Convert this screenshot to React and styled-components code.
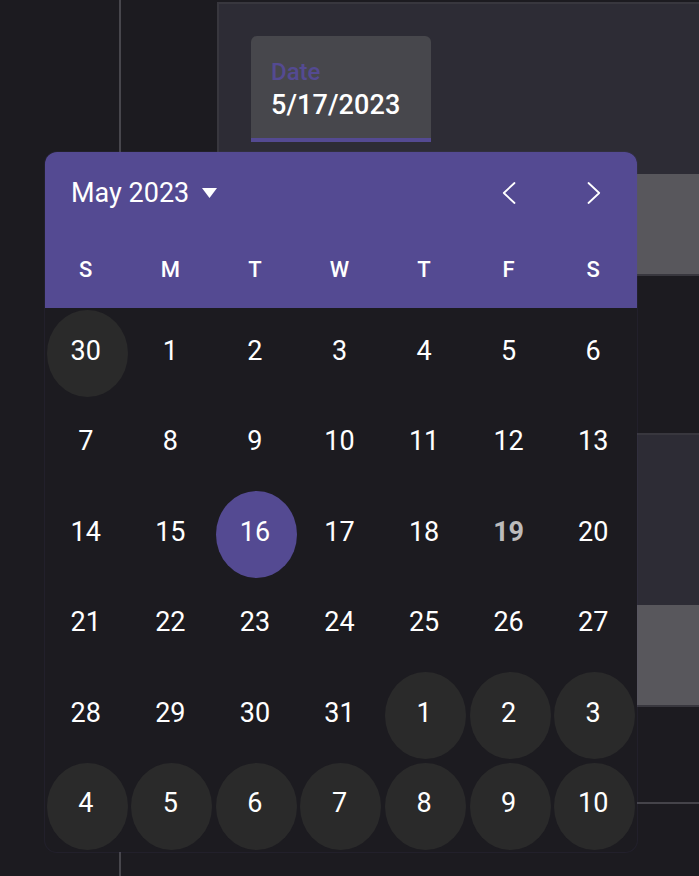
import React from "react";
import styled, { createGlobalStyle } from "styled-components";

const PURPLE = "#544a92";
const BG = "#1c1b20";

const GlobalStyle = createGlobalStyle`
  html, body {
    margin: 0;
    padding: 0;
    background: ${BG};
    font-family: Roboto, "Noto Sans", "Liberation Sans", sans-serif;
    color: #fff;
  }
  * { box-sizing: border-box; }
`;

const Page = styled.div`
  position: relative;
  display: flex;
  width: 699px;
  height: 876px;
  overflow: hidden;
  background: ${BG};
`;

const Sidebar = styled.div`
  flex: 0 0 121px;
  height: 100%;
  border-right: 2px solid #47464c;
`;

const Main = styled.div`
  flex: 1;
  display: flex;
  flex-direction: column;
  padding-left: 96px;
  padding-top: 2px;
  min-width: 0;
`;

const Panel = styled.section`
  display: flex;
  flex-direction: column;
  width: 520px;
  height: 274px;
  margin-top: ${(p) => p.$offset || 0}px;
  background: #2d2c35;
  border: 2px solid #38373e;
  border-right: none;
  flex-shrink: 0;
`;

const PanelBody = styled.div`
  flex: 1;
  padding: 32px;
`;

const PanelFooter = styled.div`
  height: 100px;
  background: #58575c;
`;

const Divider = styled.hr`
  margin: 95px 0 0 0;
  border: none;
  height: 2px;
  width: 520px;
  background: #45444a;
`;

const TextField = styled.div`
  width: 180px;
  height: 106px;
  background: #47474c;
  border-radius: 6px 6px 0 0;
  border-bottom: 4px solid ${PURPLE};
  padding: 22px 20px 0 20px;
  display: flex;
  flex-direction: column;
  gap: 3px;
`;

const FieldLabel = styled.label`
  font-size: 24px;
  line-height: 28px;
  color: ${PURPLE};
  font-weight: 500;
`;

const FieldValue = styled.div`
  font-size: 27px;
  line-height: 32px;
  font-weight: 500;
  color: #fff;
  letter-spacing: 0.1px;
`;

const Popup = styled.div`
  position: absolute;
  left: 45px;
  top: 152px;
  width: 592px;
  height: 700px;
  border-radius: 12px;
  overflow: hidden;
  background: ${BG};
  box-shadow: 0 0 0 1px rgba(84, 74, 146, 0.1);
  display: flex;
  flex-direction: column;
`;

const Header = styled.div`
  background: ${PURPLE};
  height: 156px;
  display: flex;
  flex-direction: column;
`;

const SevenCols = styled.div`
  display: grid;
  grid-template-columns: repeat(7, 1fr);
  align-items: center;
`;

const MonthRow = styled(SevenCols)`
  height: 82px;
`;

const MonthLabel = styled.button`
  grid-column: 1 / 6;
  justify-self: start;
  display: flex;
  align-items: center;
  gap: 13px;
  margin-left: 26px;
  padding: 0;
  background: none;
  border: none;
  color: #fff;
  font-family: inherit;
  font-size: 27px;
  line-height: 32px;
  font-weight: 400;
  cursor: pointer;
`;

const NavButton = styled.button`
  justify-self: center;
  width: 40px;
  height: 40px;
  display: flex;
  align-items: center;
  justify-content: center;
  background: none;
  border: none;
  padding: 0 2px 0 0;
  cursor: pointer;
`;

const WeekRow = styled(SevenCols)`
  height: 72px;
`;

const WeekDay = styled.span`
  text-align: center;
  padding-right: 3px;
  font-size: 22px;
  line-height: 26px;
  font-weight: 500;
  color: #fff;
`;

const DayGrid = styled.div`
  display: grid;
  grid-template-columns: repeat(7, 1fr);
  grid-auto-rows: 87px;
  row-gap: 3.5px;
  padding-top: 2px;
`;

const Day = styled.button`
  justify-self: center;
  width: 81px;
  height: 87px;
  border-radius: 50%;
  border: none;
  padding: 0 3px 6px 0;
  font-family: inherit;
  font-size: 27px;
  line-height: 32px;
  font-weight: ${(p) => (p.$today ? 700 : 400)};
  color: ${(p) => (p.$today ? "#bcbbbb" : "#fff")};
  background: ${(p) =>
    p.$selected ? PURPLE : p.$outside ? "#2a2a2a" : "transparent"};
  cursor: pointer;
`;

const Chevron = ({ dir }) => (
  <svg width="14" height="22" viewBox="0 0 14 22" fill="none">
    <path
      d={dir === "left" ? "M12.5 1 L1.8 11 L12.5 21" : "M1.5 1 L12.2 11 L1.5 21"}
      stroke="#fff"
      strokeWidth="1.8"
      strokeLinecap="round"
      strokeLinejoin="round"
    />
  </svg>
);

const Caret = () => (
  <svg width="15" height="10" viewBox="0 0 15 10">
    <path d="M0 0 L15 0 L7.5 10 Z" fill="#fff" />
  </svg>
);

const weekdays = ["S", "M", "T", "W", "T", "F", "S"];

const days = [
  { d: 30, outside: true },
  ...Array.from({ length: 31 }, (_, i) => ({ d: i + 1 })),
  ...Array.from({ length: 10 }, (_, i) => ({ d: i + 1, outside: true })),
];

export default function App() {
  return (
    <>
      <GlobalStyle />
      <Page>
        <Sidebar />
        <Main>
          <Panel>
            <PanelBody>
              <TextField>
                <FieldLabel>Date</FieldLabel>
                <FieldValue>5/17/2023</FieldValue>
              </TextField>
            </PanelBody>
            <PanelFooter />
          </Panel>
          <Panel $offset={157}>
            <PanelBody />
            <PanelFooter />
          </Panel>
          <Divider />
        </Main>
        <Popup>
          <Header>
            <MonthRow>
              <MonthLabel>
                May 2023
                <Caret />
              </MonthLabel>
              <NavButton aria-label="Previous month">
                <Chevron dir="left" />
              </NavButton>
              <NavButton aria-label="Next month">
                <Chevron dir="right" />
              </NavButton>
            </MonthRow>
            <WeekRow>
              {weekdays.map((w, i) => (
                <WeekDay key={i}>{w}</WeekDay>
              ))}
            </WeekRow>
          </Header>
          <DayGrid>
            {days.map((day, i) => (
              <Day
                key={i}
                $outside={day.outside}
                $selected={!day.outside && day.d === 16}
                $today={!day.outside && day.d === 19}
              >
                {day.d}
              </Day>
            ))}
          </DayGrid>
        </Popup>
      </Page>
    </>
  );
}
